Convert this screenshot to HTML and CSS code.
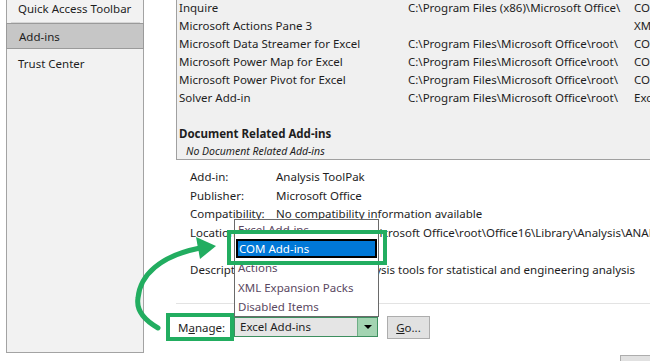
FILE: index.html
```html
<!DOCTYPE html>
<html lang="en">
<head>
    <meta charset="UTF-8">
    <meta name="viewport" content="width=device-width, initial-scale=1.0">
    <title>Excel Options - Add-ins</title>
    <link rel="stylesheet" href="styles.css">
</head>
<body>
    <div class="page">
        <div class="nav">
            <div class="nav-item first">Quick Access Toolbar</div>
            <div class="nav-sep"></div>
            <div class="nav-item selected">Add-ins</div>
            <div class="nav-item last">Trust Center</div>
        </div>

        <div class="main">
            <div class="addin-list">
                <div class="row"><span>Inquire</span><span>C:\Program Files (x86)\Microsoft Office\</span><span>COM Add-in</span></div>
                <div class="row"><span>Microsoft Actions Pane 3</span><span></span><span>XML Expansion Pack</span></div>
                <div class="row"><span>Microsoft Data Streamer for Excel</span><span>C:\Program Files\Microsoft Office\root\</span><span>COM Add-in</span></div>
                <div class="row"><span>Microsoft Power Map for Excel</span><span>C:\Program Files\Microsoft Office\root\</span><span>COM Add-in</span></div>
                <div class="row"><span>Microsoft Power Pivot for Excel</span><span>C:\Program Files\Microsoft Office\root\</span><span>COM Add-in</span></div>
                <div class="row"><span>Solver Add-in</span><span>C:\Program Files\Microsoft Office\root\</span><span>Excel Add-in</span></div>
                <div class="group-title">Document Related Add-ins</div>
                <div class="group-empty">No Document Related Add-ins</div>
            </div>

            <div class="details">
                <div class="label">Add-in:</div><div class="value">Analysis ToolPak</div>
                <div class="label">Publisher:</div><div class="value">Microsoft Office</div>
                <div class="label">Compatibility:</div><div class="value">No compatibility information available</div>
                <div class="label">Location:</div><div class="value nowrap">C:\Program Files\Microsoft Office\root\Office16\Library\Analysis\ANALYS32.XLL</div>
                <div class="label"></div><div class="value"></div>
                <div class="label">Description:</div><div class="value">Provides data analysis tools for statistical and engineering analysis</div>
            </div>

            <div class="divider"></div>

            <div class="manage-row">
                <span class="manage-label">M<u>a</u>nage:</span>
                <div class="select">
                    <span class="select-text">Excel Add-ins</span>
                    <span class="select-btn"><span class="caret"></span></span>
                    <ul class="dropdown">
                        <li>Excel Add-ins</li>
                        <li class="active">COM Add-ins</li>
                        <li>Actions</li>
                        <li>XML Expansion Packs</li>
                        <li>Disabled Items</li>
                    </ul>
                </div>
                <button class="go-btn"><u>G</u>o...</button>
            </div>

            <div class="footer">
                <button class="ok-btn">OK</button>
            </div>
        </div>
    </div>

    <!-- annotation: green callouts -->
    <svg class="callout" width="650" height="361" viewBox="0 0 650 361">
        <rect x="168" y="315" width="64" height="24" fill="none" stroke="#22ad60" stroke-width="4"/>
        <rect x="229" y="232" width="156" height="31" fill="none" stroke="#22ad60" stroke-width="4"/>
        <path d="M158,328 C144,320 136,310 138,298 C140,275 160,256 200,248" fill="none" stroke="#22ad60" stroke-width="5" stroke-linecap="round"/>
        <polygon points="196,237 216,246 200,259" fill="#22ad60"/>
    </svg>
</body>
</html>
```

FILE: styles.css
```css
body {
    margin: 0;
    padding: 0;
    background-color: #fff;
    font-family: "Noto Sans", "Open Sans", sans-serif;
    font-size: 11.5px;
    color: #1e1e1e;
    overflow: hidden;
}

.page {
    display: flex;
    align-items: flex-start;
    width: 650px;
    height: 361px;
}

/* left category list */
.nav {
    width: 136px;
    height: 357px;
    margin-left: 6px;
    margin-top: -5px;
    background-color: #f2f2f2;
    border: 1px solid #a3a3a3;
    border-top: none;
}

.nav-item {
    height: 26px;
    line-height: 26px;
    padding-left: 11px;
}

.nav-item.first {
    height: 27px;
    line-height: 27px;
}

.nav-item.last {
    height: 30px;
    line-height: 30px;
}

.nav-sep {
    height: 1px;
    margin: 0 3px 0 4px;
    background-color: #d6d6d6;
}

.nav-item.selected {
    height: 24px;
    line-height: 25px;
    margin: 0 -1px;
    padding-left: 12px;
    background-color: #c6c6c6;
    border: 1px solid #9a9a9a;
}

/* right side */
.main {
    flex: 1;
    margin-left: 32px;
    height: 361px;
    overflow: hidden;
    position: relative;
}

.addin-list {
    width: 560px;
    margin-top: -1px;
    padding-left: 2px;
    background-color: #f0f0f0;
    border-left: 1px solid #a0a0a0;
    border-bottom: 1px solid #a0a0a0;
}

.row {
    display: grid;
    grid-template-columns: 229px 226px 1fr;
    height: 18px;
    line-height: 18px;
    white-space: nowrap;
}

.group-title {
    margin-top: 18px;
    height: 18px;
    line-height: 18px;
    font-weight: bold;
}

.group-empty {
    height: 16px;
    line-height: 16px;
    padding-left: 7px;
    font-style: italic;
    font-size: 10.5px;
}

.details {
    display: grid;
    grid-template-columns: 86px 1fr;
    grid-auto-rows: 18.5px;
    line-height: 18.5px;
    margin-top: 8px;
    padding-left: 14px;
    white-space: nowrap;
}

.divider {
    height: 1px;
    margin-top: 24px;
    background-color: #e3e3e3;
}

.manage-row {
    display: flex;
    align-items: center;
    margin-top: 12px;
    height: 22px;
}

.manage-label {
    width: 56px;
    padding-left: 2px;
}

.select {
    position: relative;
    display: flex;
    width: 142px;
    height: 18px;
    border: 1px solid #3d8f5f;
    background-color: #e5e5e5;
}

.select-text {
    flex: 1;
    line-height: 18px;
    padding-left: 5px;
}

.select-btn {
    width: 19px;
    display: flex;
    align-items: center;
    justify-content: center;
    background-color: #a3d4b2;
    border-left: 1px solid #6fae86;
}

.caret {
    width: 0;
    height: 0;
    border-left: 4px solid transparent;
    border-right: 4px solid transparent;
    border-top: 4px solid #000;
}

.dropdown {
    position: absolute;
    left: -1px;
    bottom: 19px;
    width: 143px;
    margin: 0;
    padding: 0;
    list-style: none;
    background-color: #fff;
    border: 1px solid #6a6a6a;
}

.dropdown li {
    height: 19.25px;
    line-height: 19.25px;
    padding-left: 3px;
    color: #5a4862;
}

.dropdown li.active {
    margin: 0 1px;
    padding-left: 1px;
    height: 15px;
    line-height: 15px;
    background-color: #0078d7;
    color: #fff;
    border: 2px solid #000;
}

.go-btn {
    margin-left: 9px;
    width: 43px;
    height: 23px;
    padding: 0;
    font-family: inherit;
    font-size: 11.5px;
    color: #1e1e1e;
    background-color: #e1e1e1;
    border: 1px solid #adadad;
}

.footer {
    display: flex;
    justify-content: flex-end;
    margin-top: 17px;
}

.ok-btn {
    width: 40px;
    height: 23px;
    margin-right: -10px;
    background-color: #e1e1e1;
    border: 1px solid #adadad;
    font-family: inherit;
    color: transparent;
}

.nowrap {
    overflow: visible;
}

.callout {
    position: absolute;
    left: 0;
    top: 0;
    pointer-events: none;
}
```
